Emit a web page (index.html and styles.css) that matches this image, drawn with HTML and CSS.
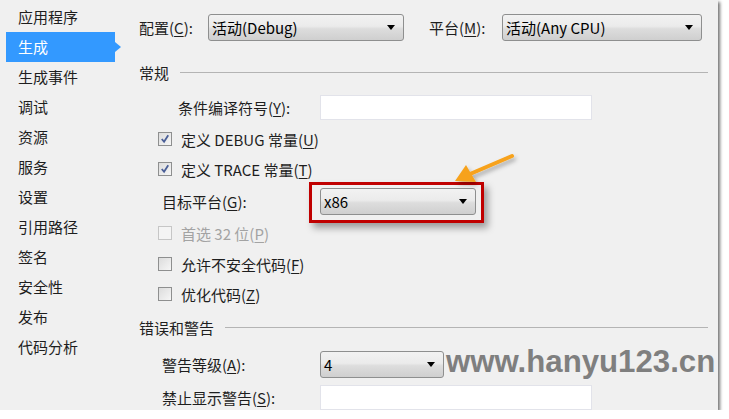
FILE: index.html
```html
<!DOCTYPE html>
<html>
<head>
    <title>项目属性 - 生成</title>
    <link rel="stylesheet" href="styles.css">
</head>
<body>

<div class="frame">
    <ul class="nav">
        <li>应用程序</li>
        <li class="active">生成</li>
        <li>生成事件</li>
        <li>调试</li>
        <li>资源</li>
        <li>服务</li>
        <li>设置</li>
        <li>引用路径</li>
        <li>签名</li>
        <li>安全性</li>
        <li>发布</li>
        <li>代码分析</li>
    </ul>

    <div class="main">
        <div class="toolbar">
            <span class="tb-label">配置(<u>C</u>):</span>
            <div class="select sel-config"><span>活动(Debug)</span><i class="caret"></i></div>
            <span class="tb-label tb-platform">平台(<u>M</u>):</span>
            <div class="select sel-platform"><span>活动(Any CPU)</span><i class="caret"></i></div>
        </div>
        <div class="rule"></div>

        <div class="section sec-general"><span>常规</span></div>

        <div class="field deep row-symbols">
            <label>条件编译符号(<u>Y</u>):</label>
            <div class="textbox"></div>
        </div>
        <div class="check row-debug">
            <span class="box"><svg viewBox="0 0 13 13"><path d="M3 6.5 L5.5 9.5 L10 2.5"/></svg></span>
            <span>定义 DEBUG 常量(<u>U</u>)</span>
        </div>
        <div class="check row-trace">
            <span class="box"><svg viewBox="0 0 13 13"><path d="M3 6.5 L5.5 9.5 L10 2.5"/></svg></span>
            <span>定义 TRACE 常量(<u>T</u>)</span>
        </div>
        <div class="field row-target">
            <label>目标平台(<u>G</u>):</label>
            <div class="select sel-target callout"><span>x86</span><i class="caret"></i></div>
        </div>
        <div class="check disabled row-prefer">
            <span class="box"></span>
            <span>首选 32 位(<u>P</u>)</span>
        </div>
        <div class="check row-unsafe">
            <span class="box"></span>
            <span>允许不安全代码(<u>F</u>)</span>
        </div>
        <div class="check row-optimize">
            <span class="box"></span>
            <span>优化代码(<u>Z</u>)</span>
        </div>

        <div class="section sec-errors"><span>错误和警告</span></div>

        <div class="field row-level">
            <label>警告等级(<u>A</u>):</label>
            <div class="select sel-level"><span>4</span><i class="caret"></i></div>
        </div>
        <div class="field row-suppress">
            <label>禁止显示警告(<u>S</u>):</label>
            <div class="textbox"></div>
        </div>
    </div>

    <!-- orange pointer at the target platform box -->
    <svg class="pointer" width="80" height="50" viewBox="0 0 80 50">
        <defs>
            <filter id="soft" x="-20%" y="-20%" width="150%" height="160%">
                <feDropShadow dx="2" dy="3" stdDeviation="2" flood-color="#000" flood-opacity="0.3"/>
            </filter>
        </defs>
        <g filter="url(#soft)">
            <line x1="62" y1="6" x2="20" y2="24" stroke="#f7a21b" stroke-width="4" stroke-linecap="round"/>
            <polygon points="5,31 16,15 26,32" fill="#f7a21b"/>
        </g>
    </svg>

    <div class="watermark">www.hanyu123.cn</div>
</div>

</body>
</html>
```

FILE: styles.css
```css
body {
    margin: 0;
    background: #ffffff;
    font-family: "Noto Sans CJK SC", "Noto Sans", sans-serif;
    font-size: 15px;
    color: #1e1e1e;
}
.frame {
    position: relative;
    width: 718px;
    height: 410px;
    background: #f0f0f0;
    display: flex;
    overflow: hidden;
    box-shadow: 2px 2px 3px rgba(0,0,0,0.55);
}
u {
    text-decoration: underline;
    text-underline-offset: 2px;
}

/* left navigation */
.nav {
    list-style: none;
    margin: 0;
    padding: 2px 0 0 6px;
    width: 130px;
    flex-shrink: 0;
}
.nav li {
    position: relative;
    width: 109px;
    height: 30px;
    line-height: 30px;
    padding-left: 12px;
    box-sizing: border-box;
}
.nav li.active {
    background: #3399ff;
    color: #ffffff;
}
.nav li.active::after {
    content: "";
    position: absolute;
    left: 109px;
    top: 10px;
    border-top: 5px solid transparent;
    border-bottom: 5px solid transparent;
    border-left: 6px solid #3399ff;
}

/* settings panel */
.main {
    flex: 1;
    padding-top: 14px;
    display: flex;
    flex-direction: column;
}
.toolbar {
    display: flex;
    align-items: center;
    height: 27px;
    padding-left: 3px;
}
.tb-label {
    width: 69px;
}
.tb-platform {
    margin-left: 25px;
    width: 73px;
}
.rule {
    margin-top: 16px;
    height: 1px;
    background: #a0a0a0;
}
.section {
    display: flex;
    align-items: center;
    height: 20px;
    padding-left: 3px;
    margin-right: 10px;
}
.section::after {
    content: "";
    flex: 1;
    height: 1px;
    background: #b4b4b4;
    margin-left: 11px;
}
.sec-general { margin-top: 5px; }
.sec-errors { margin-top: 13px; }

.field {
    display: flex;
    align-items: center;
}
.field label {
    width: 184px;
    padding-left: 26px;
    box-sizing: border-box;
}
.field.deep label {
    padding-left: 42px;
}
.textbox {
    width: 272px;
    height: 25px;
    background: #ffffff;
    border: 1px solid #e2e3ea;
    box-sizing: border-box;
}

.select {
    position: relative;
    display: flex;
    align-items: center;
    height: 27px;
    padding-left: 3px;
    box-sizing: border-box;
    border: 1px solid #8e8f8f;
    border-radius: 3px;
    background: linear-gradient(#f2f2f2 0%, #ebebeb 45%, #dddddd 55%, #cfcfcf 100%);
    color: #000;
}
.select span {
    flex: 1;
}
.caret {
    width: 0;
    height: 0;
    margin-right: 8px;
    border-left: 4px solid transparent;
    border-right: 4px solid transparent;
    border-top: 5px solid #000;
}
.sel-config { width: 196px; }
.sel-platform { width: 200px; }
.sel-target { width: 156px; }
.sel-level { width: 124px; }

.callout::before {
    content: "";
    position: absolute;
    left: -12px;
    top: -7px;
    right: -9px;
    bottom: -9px;
    border: 3px solid #c00000;
    box-shadow: 4px 5px 7px rgba(0,0,0,0.35);
}

.check {
    display: flex;
    align-items: center;
    height: 20px;
    padding-left: 22px;
}
.box {
    width: 14px;
    height: 14px;
    margin-right: 9px;
    box-sizing: border-box;
    border: 1px solid #8e8f8f;
    background: linear-gradient(135deg, #dcdcdc, #f6f6f6);
}
.box svg {
    display: block;
    width: 12px;
    height: 12px;
}
.box path {
    fill: none;
    stroke: #4a5f97;
    stroke-width: 2;
}
.check.disabled {
    color: #a3a3a3;
}
.check.disabled .box {
    border-color: #c6c6c6;
    background: #f4f4f4;
}

.row-symbols { margin-top: 13px; height: 25px; }
.row-debug { margin-top: 9px; }
.row-trace { margin-top: 10px; }
.row-target { margin-top: 9px; height: 27px; }
.row-prefer { margin-top: 8px; }
.row-unsafe { margin-top: 11px; }
.row-optimize { margin-top: 10px; }
.row-level { margin-top: 14px; height: 27px; }
.row-suppress { margin-top: 7px; height: 25px; }

.pointer {
    position: absolute;
    left: 450px;
    top: 150px;
}
.watermark {
    position: absolute;
    left: 446px;
    top: 344px;
    font-family: "Liberation Sans", Arial, sans-serif;
    font-weight: bold;
    font-size: 31.2px;
    color: #7f7f7f;
}
```
